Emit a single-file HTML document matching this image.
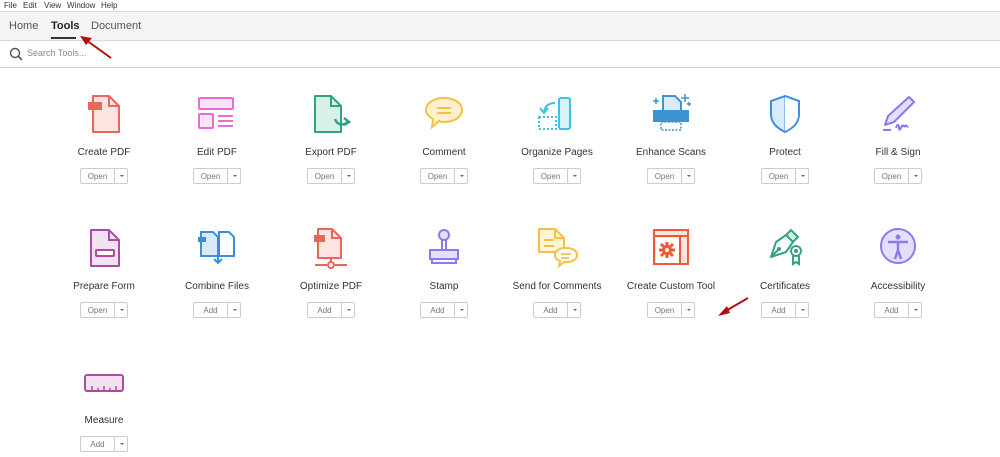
<!DOCTYPE html>
<html><head><style>
*{margin:0;padding:0;box-sizing:border-box}
body{width:1000px;height:457px;background:#fff;font-family:"Liberation Sans",sans-serif;position:relative;overflow:hidden;color:#333}
.menu{position:absolute;top:0;left:0;width:1000px;height:11px;font-size:8px;background:#fff}
.menu span{position:absolute;top:1px}
.tabs{position:absolute;top:11px;left:0;width:1000px;height:30px;background:#f4f4f4;border-top:1px solid #ddd;border-bottom:1px solid #d8d8d8}
.tabs span{position:absolute;top:8px;font-size:11px;color:#555}
.search{position:absolute;top:41px;left:0;width:1000px;height:27px;background:#fff;border-bottom:1px solid #d0d0d0}
.t{position:absolute;width:114px;text-align:center}
.t svg{display:block;margin:0 auto}
.lbl{position:absolute;width:140px;left:-13px;text-align:center;font-size:10px;color:#333}
.btn{position:absolute;left:33px;width:48px;height:16px;border:1px solid #ccc;border-radius:2px;background:#fff;font-size:8px;color:#777}
.btn .a{position:absolute;left:0;top:3px;width:33px;text-align:center}
.btn .d{position:absolute;left:33px;top:0;width:14px;height:14px;border-left:1px solid #ccc}
.btn .d:after{content:"";position:absolute;left:5px;top:6px;border-left:2px solid transparent;border-right:2px solid transparent;border-top:2px solid #666}
</style></head><body>
<div class="menu"><span style="left:4px">File</span><span style="left:23px">Edit</span><span style="left:44px">View</span><span style="left:67px">Window</span><span style="left:101px">Help</span></div>
<div class="tabs"><span style="left:9px">Home</span><span style="left:51px;font-weight:bold;color:#222">Tools</span><span style="left:91px">Document</span><div style="position:absolute;left:51px;top:25px;width:25px;height:2px;background:#333"></div></div>
<div class="search"><svg style="position:absolute;left:9px;top:6px" width="14" height="14"><circle cx="6" cy="6" r="4.5" fill="none" stroke="#555" stroke-width="1.4"/><line x1="9" y1="9" x2="13" y2="13" stroke="#555" stroke-width="1.6"/></svg><span style="position:absolute;left:27px;top:7px;font-size:9px;color:#888">Search Tools...</span></div>
<svg style="position:absolute;left:0;top:0" width="1000" height="457"><g stroke="#b01010" stroke-width="2" fill="#b01010"><line x1="111" y1="58" x2="86" y2="40"/><polygon points="80,36 92,38 86,45" stroke="none"/><line x1="748" y1="298" x2="724" y2="312"/><polygon points="718,316 727,306 730,313" stroke="none"/></g></svg>

<!-- row 1 -->
<div class="t" style="left:47px;top:92px"><svg width="44" height="44" viewBox="0 0 44 44"><path d="M11 4h16l10 10v26H11z" fill="#fde4e1" stroke="#e8675a" stroke-width="2" stroke-linejoin="round"/><path d="M27 4v10h10" fill="none" stroke="#e8675a" stroke-width="2"/><rect x="6" y="10" width="14" height="8" fill="#e8675a"/></svg><div class="lbl" style="top:55px">Create PDF</div><div class="btn" style="top:76px"><span class="a">Open</span><span class="d"></span></div></div>
<div class="t" style="left:160px;top:92px"><svg width="44" height="44" viewBox="0 0 44 44"><rect x="4" y="6" width="34" height="11" rx="1" fill="#fbe3f6" stroke="#ea6ad6" stroke-width="2"/><rect x="4" y="22" width="14" height="14" rx="1" fill="#fbe3f6" stroke="#ea6ad6" stroke-width="2"/><path d="M23 24h15M23 29h15M23 34h15" stroke="#ea6ad6" stroke-width="2"/></svg><div class="lbl" style="top:55px">Edit PDF</div><div class="btn" style="top:76px"><span class="a">Open</span><span class="d"></span></div></div>
<div class="t" style="left:274px;top:92px"><svg width="44" height="44" viewBox="0 0 44 44"><path d="M6 4h16l10 10v26H6z" fill="#d7f0e8" stroke="#2fa383" stroke-width="2" stroke-linejoin="round"/><path d="M22 4v10h10" fill="none" stroke="#2fa383" stroke-width="2"/><path d="M26 27c2 6 8 7 13 3" fill="none" stroke="#2fa383" stroke-width="2.5"/><path d="M35 26l5 4-5 3" fill="none" stroke="#2fa383" stroke-width="2.5"/></svg><div class="lbl" style="top:55px">Export PDF</div><div class="btn" style="top:76px"><span class="a">Open</span><span class="d"></span></div></div>
<div class="t" style="left:387px;top:92px"><svg width="44" height="44" viewBox="0 0 44 44"><path d="M22 6c10 0 18 5 18 12s-8 12-18 12c-2 0-3 0-5-1l-7 6 1-8c-4-2-7-5-7-9 0-7 8-12 18-12z" fill="#fff1cf" stroke="#f6bf45" stroke-width="2"/><path d="M15 16h14M15 21h14" stroke="#f6bf45" stroke-width="2"/></svg><div class="lbl" style="top:55px">Comment</div><div class="btn" style="top:76px"><span class="a">Open</span><span class="d"></span></div></div>
<div class="t" style="left:500px;top:92px"><svg width="44" height="44" viewBox="0 0 44 44"><rect x="24" y="6" width="11" height="31" rx="2" fill="#d5f3fa" stroke="#3dc3e0" stroke-width="2"/><rect x="4" y="25" width="17" height="12" fill="none" stroke="#3dc3e0" stroke-width="2" stroke-dasharray="2 2"/><path d="M20 11c-6 0-10 3-11 9" fill="none" stroke="#3dc3e0" stroke-width="2"/><path d="M5 16l4 5 4-5" fill="none" stroke="#3dc3e0" stroke-width="2"/></svg><div class="lbl" style="top:55px">Organize Pages</div><div class="btn" style="top:76px"><span class="a">Open</span><span class="d"></span></div></div>
<div class="t" style="left:614px;top:92px"><svg width="44" height="44" viewBox="0 0 44 44"><path d="M14 4h12l6 6v12H14z" fill="#dcebf7" stroke="#3e94d1" stroke-width="2"/><rect x="4" y="18" width="36" height="12" fill="#3e94d1"/><rect x="12" y="30" width="20" height="8" fill="none" stroke="#3e94d1" stroke-width="1.5" stroke-dasharray="2 1.5"/><path d="M7 6v6M4 9h6M36 2v8M32 6h8M40 10v4M38 12h4" stroke="#3e94d1" stroke-width="1.5"/></svg><div class="lbl" style="top:55px">Enhance Scans</div><div class="btn" style="top:76px"><span class="a">Open</span><span class="d"></span></div></div>
<div class="t" style="left:728px;top:92px"><svg width="44" height="44" viewBox="0 0 44 44"><path d="M22 4l14 5v13c0 9-6 14-14 18-8-4-14-9-14-18V9z" fill="#d9ebfb" stroke="#3a8ee0" stroke-width="2"/><path d="M22 4v36" stroke="#3a8ee0" stroke-width="1"/><path d="M22 5l13 5v12c0 8-5 13-13 17z" fill="#fff"/></svg><div class="lbl" style="top:55px">Protect</div><div class="btn" style="top:76px"><span class="a">Open</span><span class="d"></span></div></div>
<div class="t" style="left:841px;top:92px"><svg width="44" height="44" viewBox="0 0 44 44"><path d="M33 5l5 5-20 20-9 3 3-9z" fill="#e4e0fb" stroke="#8a7af0" stroke-width="2" stroke-linejoin="round"/><path d="M7 38h8M20 36c1-4 3-4 3 0s2 0 3-2 2 2 3 0 2 2 3 0" fill="none" stroke="#8a7af0" stroke-width="2"/></svg><div class="lbl" style="top:55px">Fill &amp; Sign</div><div class="btn" style="top:76px"><span class="a">Open</span><span class="d"></span></div></div>

<!-- row 2 -->
<div class="t" style="left:47px;top:226px"><svg width="44" height="44" viewBox="0 0 44 44"><path d="M9 4h18l10 10v26H9z" fill="#f2e2f1" stroke="#a94ca5" stroke-width="2" stroke-linejoin="round"/><path d="M27 4v10h10" fill="none" stroke="#a94ca5" stroke-width="2"/><rect x="14" y="24" width="18" height="6" rx="1" fill="#fff" stroke="#a94ca5" stroke-width="2"/></svg><div class="lbl" style="top:55px">Prepare Form</div><div class="btn" style="top:76px"><span class="a">Open</span><span class="d"></span></div></div>
<div class="t" style="left:160px;top:226px"><svg width="44" height="44" viewBox="0 0 44 44"><path d="M6 6h12l5 5v19H6z" fill="#d9ebfb" stroke="#3a8ee0" stroke-width="2"/><path d="M24 6h10l5 5v19H24z" fill="#fff" stroke="#3a8ee0" stroke-width="2"/><rect x="3" y="11" width="8" height="5" fill="#3a8ee0"/><path d="M23 22v15M19 33l4 4 4-4" fill="none" stroke="#3a8ee0" stroke-width="2"/></svg><div class="lbl" style="top:55px">Combine Files</div><div class="btn" style="top:76px"><span class="a">Add</span><span class="d"></span></div></div>
<div class="t" style="left:274px;top:226px"><svg width="44" height="44" viewBox="0 0 44 44"><path d="M9 3h14l9 9v20H9z" fill="#fde4e1" stroke="#e8675a" stroke-width="2" stroke-linejoin="round"/><path d="M23 3v9h9" fill="none" stroke="#e8675a" stroke-width="2"/><rect x="5" y="9" width="11" height="7" fill="#e8675a"/><path d="M6 39h12M26 39h12" stroke="#e8675a" stroke-width="2"/><circle cx="22" cy="39" r="3" fill="none" stroke="#e8675a" stroke-width="2"/><path d="M22 32v4" stroke="#e8675a" stroke-width="2"/></svg><div class="lbl" style="top:55px">Optimize PDF</div><div class="btn" style="top:76px"><span class="a">Add</span><span class="d"></span></div></div>
<div class="t" style="left:387px;top:226px"><svg width="44" height="44" viewBox="0 0 44 44"><circle cx="22" cy="9" r="5" fill="#e4e0fb" stroke="#8a7af0" stroke-width="2"/><path d="M20 14v10M24 14v10" stroke="#8a7af0" stroke-width="2"/><rect x="8" y="24" width="28" height="9" fill="#e4e0fb" stroke="#8a7af0" stroke-width="2"/><rect x="10" y="33" width="24" height="4" fill="#fff" stroke="#8a7af0" stroke-width="2"/></svg><div class="lbl" style="top:55px">Stamp</div><div class="btn" style="top:76px"><span class="a">Add</span><span class="d"></span></div></div>
<div class="t" style="left:500px;top:226px"><svg width="44" height="44" viewBox="0 0 44 44"><path d="M4 3h16l9 9v14H4z" fill="#fff4d6" stroke="#f6bf45" stroke-width="2" stroke-linejoin="round"/><path d="M20 3v9h9M9 14h10M9 20h10" fill="none" stroke="#f6bf45" stroke-width="2"/><path d="M31 22c7 0 11 3 11 7s-4 7-11 7h-2l-5 4 1-5c-3-1-5-3-5-6 0-4 4-7 11-7z" fill="#fff" stroke="#f6bf45" stroke-width="2"/><path d="M26 28h10M26 32h8" stroke="#f6bf45" stroke-width="1.8"/></svg><div class="lbl" style="top:55px">Send for Comments</div><div class="btn" style="top:76px"><span class="a">Add</span><span class="d"></span></div></div>
<div class="t" style="left:614px;top:226px"><svg width="44" height="44" viewBox="0 0 44 44"><rect x="5" y="4" width="34" height="34" fill="#fde4e1" stroke="#ef5a36" stroke-width="2"/><path d="M5 10h34M31 10v28" stroke="#ef5a36" stroke-width="2"/><rect x="7" y="12" width="23" height="25" fill="#fff"/><circle cx="18" cy="24" r="5" fill="#ef5a36"/><g stroke="#ef5a36" stroke-width="3"><path d="M18 16v16M10 24h16M12 18l12 12M24 18l-12 12"/></g><circle cx="18" cy="24" r="2" fill="#fff"/></svg><div class="lbl" style="top:55px">Create Custom Tool</div><div class="btn" style="top:76px"><span class="a">Open</span><span class="d"></span></div></div>
<div class="t" style="left:728px;top:226px"><svg width="44" height="44" viewBox="0 0 44 44"><path d="M28 4l7 7-5 5-7-7z" fill="#cdeee2"/><path d="M23 9l7 7-7 10-15 5 5-15z" fill="none" stroke="#2fa383" stroke-width="2" stroke-linejoin="round"/><path d="M23 9l5-5 7 7-5 5M8 31l8-8" stroke="#2fa383" stroke-width="2" fill="none"/><circle cx="16" cy="23" r="2" fill="#2fa383"/><circle cx="33" cy="25" r="5" fill="#fff" stroke="#2fa383" stroke-width="2"/><circle cx="33" cy="25" r="2" fill="#2fa383"/><path d="M30 30v8l3-2 3 2v-8" fill="none" stroke="#2fa383" stroke-width="2"/></svg><div class="lbl" style="top:55px">Certificates</div><div class="btn" style="top:76px"><span class="a">Add</span><span class="d"></span></div></div>
<div class="t" style="left:841px;top:226px"><svg width="44" height="44" viewBox="0 0 44 44"><circle cx="22" cy="20" r="17" fill="#e4e0fb" stroke="#8a7af0" stroke-width="2"/><circle cx="22" cy="11" r="2.5" fill="#8a7af0"/><path d="M12 16h20M22 16v9M22 24l-3 9M22 24l3 9" stroke="#8a7af0" stroke-width="2.5" fill="none"/></svg><div class="lbl" style="top:55px">Accessibility</div><div class="btn" style="top:76px"><span class="a">Add</span><span class="d"></span></div></div>

<!-- row 3 -->
<div class="t" style="left:47px;top:360px"><svg width="44" height="44" viewBox="0 0 44 44"><rect x="3" y="15" width="38" height="16" rx="2" fill="#f2e2f1" stroke="#a94ca5" stroke-width="2"/><path d="M10 31v-5M16 31v-3M22 31v-5M28 31v-3M34 31v-5" stroke="#a94ca5" stroke-width="1.5"/></svg><div class="lbl" style="top:55px">Measure</div><div class="btn" style="top:76px"><span class="a">Add</span><span class="d"></span></div></div>
</body></html>
